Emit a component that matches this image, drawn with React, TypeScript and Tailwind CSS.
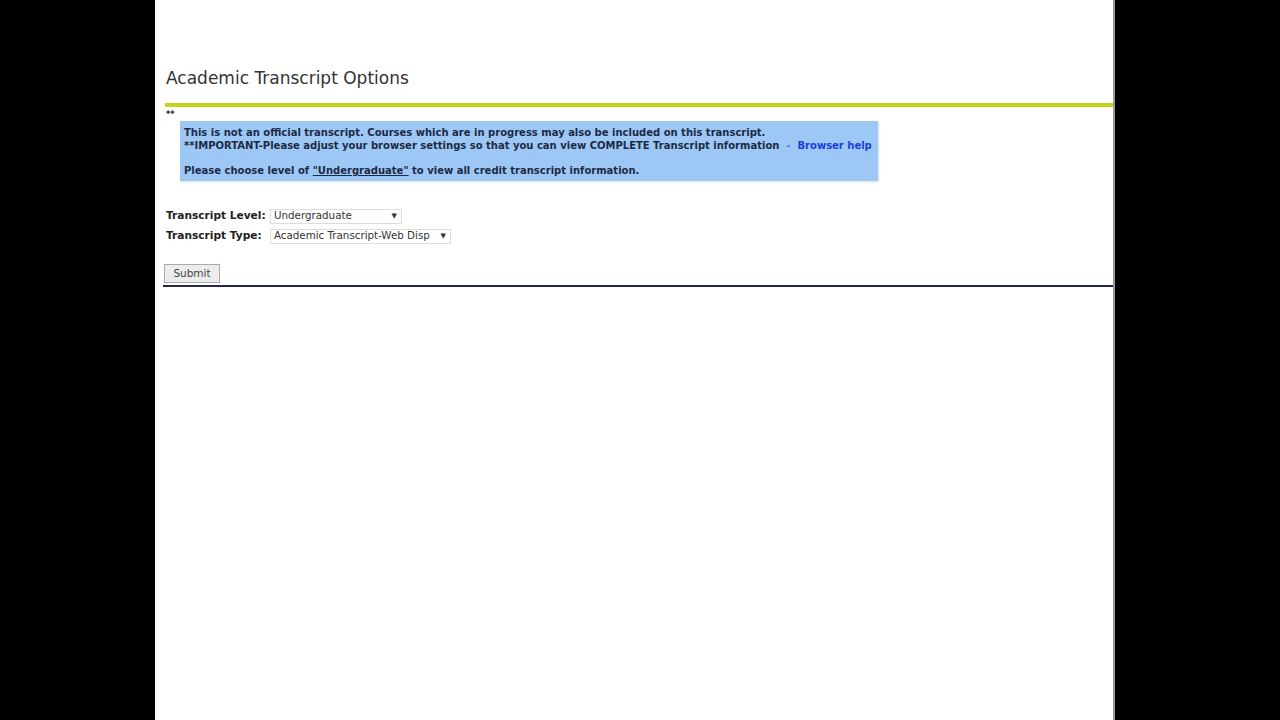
import React from "react";

export default function App() {
  return (
    <div className="w-[1280px] h-[720px] bg-black flex overflow-hidden" style={{ fontFamily: '"DejaVu Sans", Verdana, sans-serif' }}>
      <div className="w-[155px] shrink-0" />
      <div className="w-[960px] h-full bg-white border-r-[2px] border-[#9a9a9a] relative">
        <div className="pl-[11px] pt-[68px] text-[17px] leading-[20px] text-[#333]">Academic Transcript Options</div>
        <div className="ml-[10px] mt-[15px] h-[4px] bg-[#c6d41c]" />
        <div className="ml-[11px] mt-[4px] text-[8px] leading-[8px] font-bold text-[#222]">**</div>
        <div className="ml-[25px] mt-[2px] w-[698px] h-[60px] bg-[#9dc8f6] pl-[4px] pt-[5px] text-[10px] leading-[13px] font-bold text-[#1d2a44] shadow-[1px_1px_2px_rgba(0,0,0,0.15)]">
          <div>This is not an official transcript. Courses which are in progress may also be included on this transcript.</div>
          <div>**IMPORTANT-Please adjust your browser settings so that you can view COMPLETE Transcript information <span className="text-[#5a7bb0]">&nbsp;-&nbsp;</span> <span className="text-[#1a3ed8]">Browser help</span></div>
          <div className="mt-[12px]">Please choose level of <span className="underline">"Undergraduate"</span> to view all credit transcript information.</div>
        </div>
        <div className="ml-[11px] mt-[28px] flex flex-col gap-[6px] text-[10.6px] font-bold text-[#222]">
          <div className="flex items-center h-[14px]">
            <span className="w-[104px]">Transcript Level:</span>
            <div className="w-[132px] h-[15px] border border-[#ddd] bg-white flex items-center justify-between pl-[3px] pr-[4px] font-normal text-[10.3px] text-[#333]">
              <span>Undergraduate</span><span className="text-[7px]">▼</span>
            </div>
          </div>
          <div className="flex items-center h-[14px]">
            <span className="w-[104px]">Transcript Type:</span>
            <div className="w-[181px] h-[15px] border border-[#ddd] bg-white flex items-center justify-between pl-[3px] pr-[4px] font-normal text-[10.3px] text-[#333]">
              <span>Academic Transcript-Web Disp</span><span className="text-[7px]">▼</span>
            </div>
          </div>
        </div>
        <div className="ml-[9px] mt-[21px] w-[56px] h-[19px] border border-[#aaa] bg-[#ececec] text-[10.5px] text-[#444] flex items-center justify-center">Submit</div>
        <div className="ml-[8px] mt-[2px] h-[2px] bg-[#23264f]" />
      </div>
    </div>
  );
}
